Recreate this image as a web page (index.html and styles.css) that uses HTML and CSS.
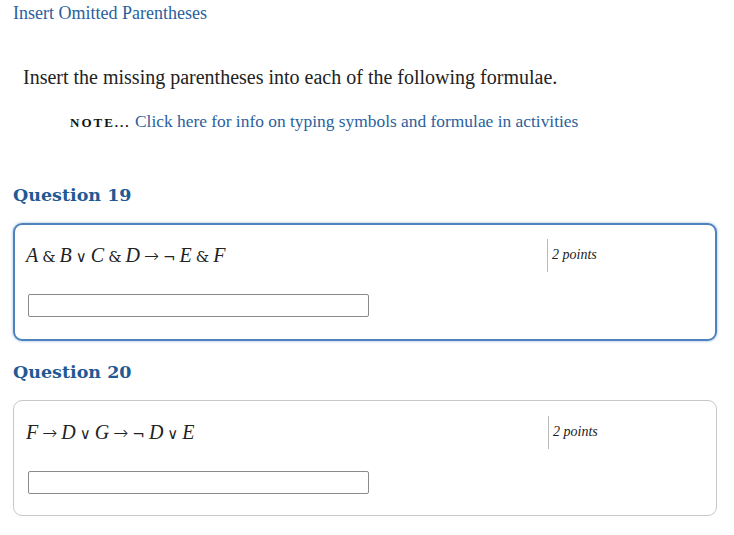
FILE: index.html
```html
<!DOCTYPE html>
<html lang="en">
<head>
    <meta charset="UTF-8">
    <meta name="viewport" content="width=device-width, initial-scale=1.0">
    <title>Insert Omitted Parentheses</title>
    <link rel="stylesheet" href="styles.css">
</head>
<body>
    <div class="page">
        <div class="activity-title">Insert Omitted Parentheses</div>
        <p class="instructions">Insert the missing parentheses into each of the following formulae.</p>
        <p class="note"><span class="note-label">Note...</span> <a href="#">Click here for info on typing symbols and formulae in activities</a></p>

        <h2 class="question-title">Question 19</h2>
        <div class="question active">
            <div class="question-top">
                <div class="formula">A<span class="op">&amp;</span>B<span class="op">&or;</span>C<span class="op">&amp;</span>D<span class="op arrow">&rarr;</span><span class="neg">&not;</span>E<span class="op">&amp;</span>F</div>
                <div class="points">2 points</div>
            </div>
            <input type="text" class="answer">
        </div>

        <h2 class="question-title">Question 20</h2>
        <div class="question">
            <div class="question-top">
                <div class="formula">F<span class="op arrow">&rarr;</span>D<span class="op">&or;</span>G<span class="op arrow">&rarr;</span><span class="neg">&not;</span>D<span class="op">&or;</span>E</div>
                <div class="points">2 points</div>
            </div>
            <input type="text" class="answer">
        </div>
    </div>
</body>
</html>
```

FILE: styles.css
```css
body {
    margin: 0;
    font-family: "Liberation Serif", serif;
    color: #222;
    background: #fff;
}
.page {
    padding: 3px 17px 0 13px;
}
.activity-title {
    font-size: 18px;
    color: #2a5f9e;
    line-height: 20px;
}
.instructions {
    font-size: 20px;
    margin: 41px 0 0 10px;
    line-height: 26px;
}
.note {
    margin: 20px 0 0 57px;
    font-size: 17.4px;
    line-height: 22px;
}
.note-label {
    font-size: 13px;
    font-weight: bold;
    text-transform: uppercase;
    letter-spacing: 2px;
    color: #111;
}
.note a {
    color: #2a5f9e;
    text-decoration: none;
}
.question-title {
    font-family: "DejaVu Serif", serif;
    font-weight: bold;
    font-size: 17.5px;
    color: #1f5a94;
    margin: 49px 0 0 0;
    line-height: 24px;
}
.question-title + .question {
    margin-top: 16px;
}
.question + .question-title {
    margin-top: 19px;
}
.question {
    border: 1px solid #c8c8c8;
    border-radius: 9px;
    padding: 15px 0 22px 15px;
    height: 77px;
}
.question.active {
    border: 2px solid #4d82bf;
    box-shadow: 0 0 3px rgba(77, 130, 191, 0.6);
    padding: 14px 0 21px 14px;
    height: 79px;
}
.question-top {
    display: flex;
    justify-content: space-between;
    align-items: center;
}
.formula {
    font-style: italic;
    font-size: 20px;
    margin-left: -3px;
}
.formula .op {
    font-family: "DejaVu Serif", serif;
    font-style: normal;
    font-size: 15px;
    margin: 0 4px;
}
.formula .arrow {
    font-family: "DejaVu Sans", sans-serif;
    font-weight: 200;
    font-size: 18px;
    line-height: 1;
    margin: 0 4px;
}
.formula .neg {
    font-family: "DejaVu Serif", serif;
    font-style: normal;
    font-size: 15px;
    margin-right: 4px;
}
.points {
    width: 168px;
    border-left: 1px solid #bdbdbd;
    padding: 8px 0 9px 4px;
    font-style: italic;
    font-size: 14px;
    box-sizing: border-box;
    line-height: 16px;
}
.answer {
    display: block;
    margin-top: 22px;
    margin-left: -1px;
    width: 341px;
    height: 23px;
    box-sizing: border-box;
    border: 1px solid #8a8a8a;
    border-radius: 2px;
}
```
